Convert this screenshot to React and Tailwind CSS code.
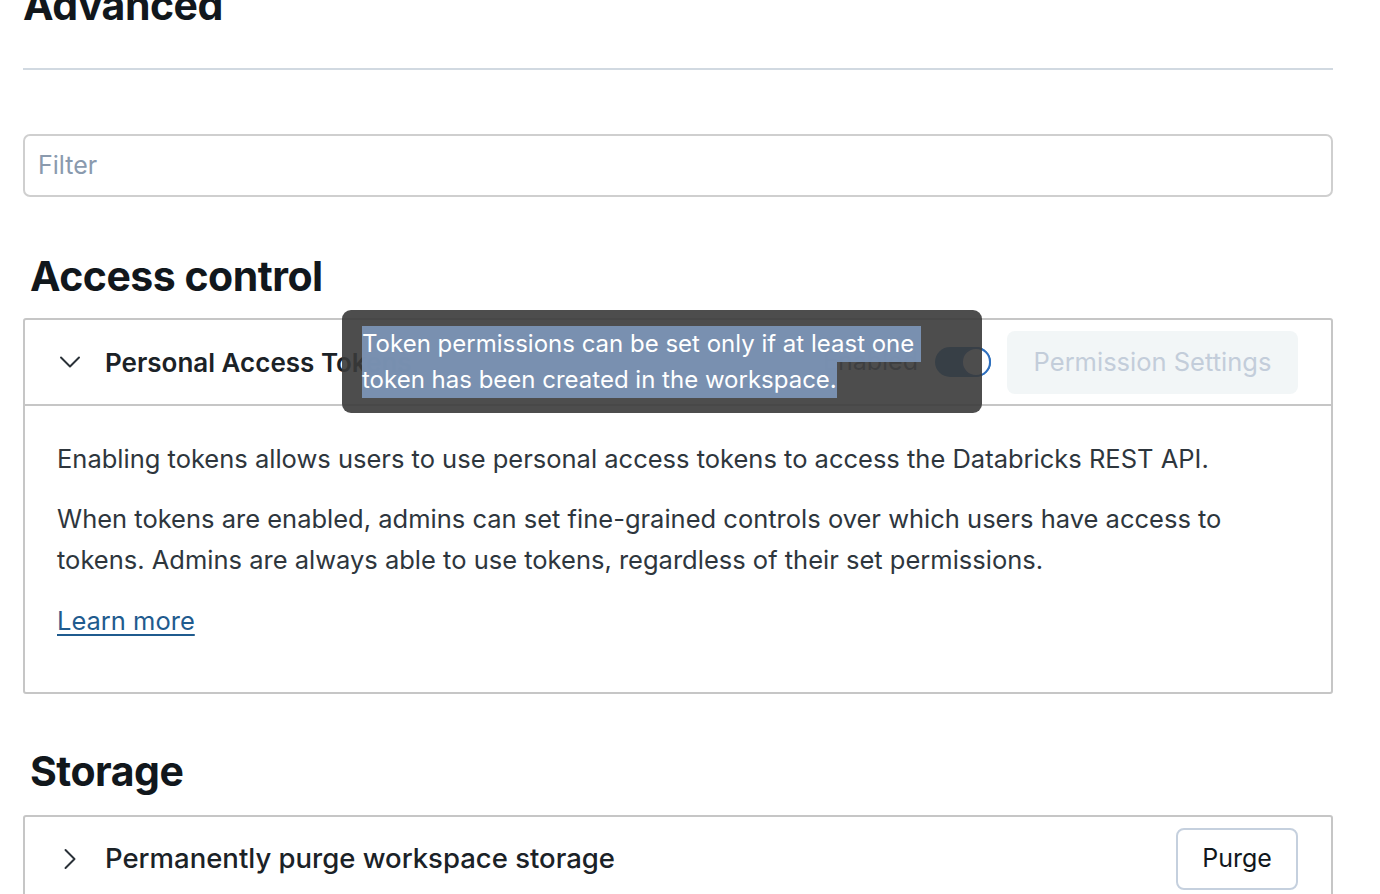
import React from 'react';
import { ChevronDown, ChevronRight } from 'lucide-react';

function Toggle() {
  return (
    <div className="relative w-[56px] h-[30px] rounded-full bg-[#2272b4]">
      <div className="absolute right-0 top-0 w-[30px] h-[30px] rounded-full bg-white border-2 border-[#2f6fbf]" />
    </div>
  );
}

export default function App() {
  return (
    <div className="min-h-screen bg-white pl-[23px] pr-[47px] font-['Inter',sans-serif] text-[#1e252b] overflow-hidden">
      <h1 className="-mt-[19px] text-[41px] leading-[48px] font-bold tracking-[-0.5px] text-[#11171c]">Advanced</h1>
      <div className="mt-[39px] h-[2px] bg-[#d1d9e1]" />

      <div className="mt-[64px] h-[63px] rounded-[7px] border-2 border-[#cfcfcf] px-[13px] flex items-center text-[25px] text-[#8a9aae]">
        Filter
      </div>

      <h2 className="mt-[54px] pl-[7px] text-[41px] leading-[50px] font-bold tracking-[-0.5px] text-[#11171c]">Access control</h2>

      <div className="relative mt-[17px] border-2 border-[#c6c6c6] rounded-[3px]">
        <div className="h-[86px] flex items-center pl-[27px] pr-[33px] border-b-2 border-[#c6c6c6]">
          <ChevronDown size={36} strokeWidth={1.3} className="text-[#2a3138]" />
          <span className="ml-[17px] text-[26px] font-semibold text-[#1b2227]">Personal Access Tokens</span>
          <div className="ml-auto flex items-center">
            <span className="text-[25px] text-[#5f6b77]">Enabled</span>
            <div className="ml-[17px]"><Toggle /></div>
            <div className="ml-[16px] w-[291px] h-[63px] rounded-[8px] bg-[#f2f6f7] flex items-center justify-center text-[25.5px] text-[#c3cdda]">
              Permission Settings
            </div>
          </div>
        </div>

        <div className="pl-[32px] pr-[32px] pt-[32px] pb-[51px] text-[25.5px] leading-[41px] text-[#2e363d]">
          <p>Enabling tokens allows users to use personal access tokens to access the Databricks REST API.</p>
          <p className="mt-[19px]">When tokens are enabled, admins can set fine-grained controls over which users have access to tokens. Admins are always able to use tokens, regardless of their set permissions.</p>
          <p className="mt-[20px]"><a className="text-[#1f5b8e] underline underline-offset-[4px]">Learn more</a></p>
        </div>

        <div className="absolute left-[317px] -top-[10px] w-[640px] h-[103px] rounded-[9px] bg-[rgba(58,58,58,0.9)] pl-[20px] pt-[16px] text-[24px] leading-[36px] text-white">
          <div className="w-fit h-[36px] bg-[rgba(123,147,181,0.95)] pr-[7px]">Token permissions can be set only if at least one</div>
          <div className="w-fit h-[36px] bg-[rgba(123,147,181,0.95)]">token has been created in the workspace.</div>
        </div>
      </div>

      <h2 className="mt-[52px] pl-[7px] text-[41px] leading-[50px] font-bold tracking-[-0.5px] text-[#11171c]">Storage</h2>

      <div className="mt-[19px] border-2 border-[#c6c6c6] rounded-[3px]">
        <div className="h-[84px] flex items-center pl-[27px] pr-[33px]">
          <ChevronRight size={36} strokeWidth={1.3} className="text-[#2a3138]" />
          <span className="ml-[17px] text-[27.5px] font-medium text-[#1b2227]">Permanently purge workspace storage</span>
          <div className="ml-auto w-[122px] h-[62px] rounded-[8px] border-2 border-[#c5d0de] flex items-center justify-center text-[25px] text-[#11171c]">
            Purge
          </div>
        </div>
      </div>
    </div>
  );
}
